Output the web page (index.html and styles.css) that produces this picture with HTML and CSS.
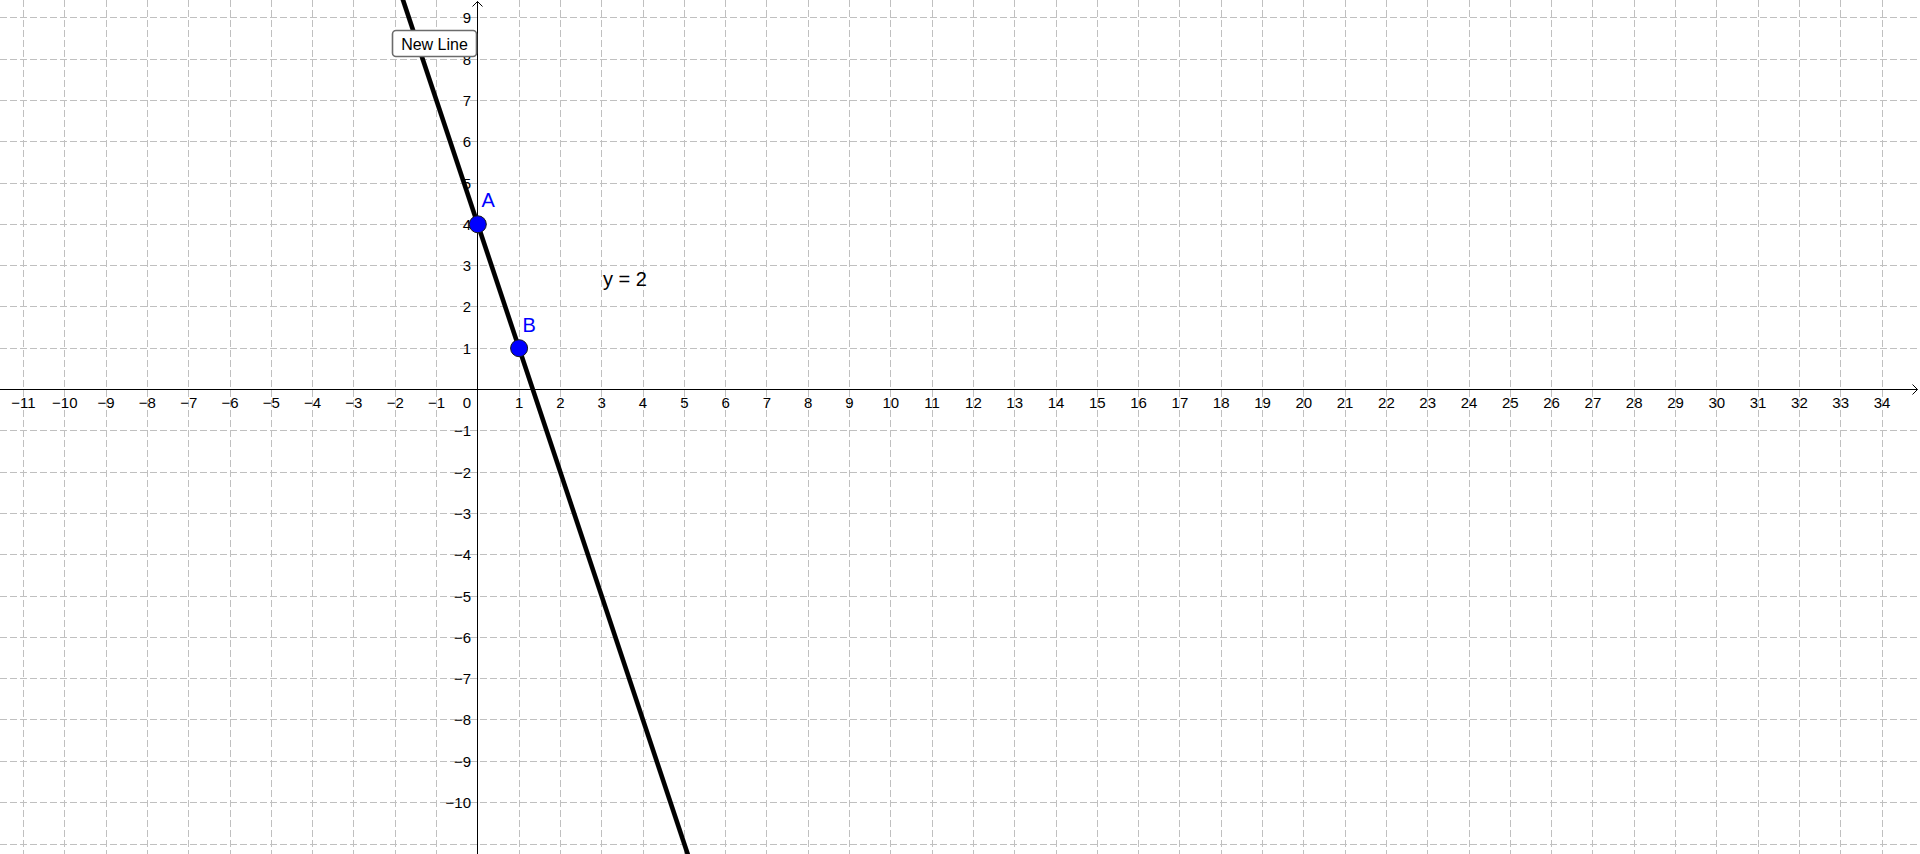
FILE: index.html
```html
<!DOCTYPE html>
<html lang="en">
<head>
<meta charset="utf-8">
<title>Graphics</title>
<link rel="stylesheet" href="styles.css">
</head>
<body>
<main class="board">
<svg class="plot" width="1920" height="854" viewBox="0 0 1920 854" xmlns="http://www.w3.org/2000/svg">
  <path class="grid" d="M23.5 0V854M64.5 0V854M106.5 0V854M147.5 0V854M188.5 0V854M230.5 0V854M271.5 0V854M312.5 0V854M353.5 0V854M395.5 0V854M436.5 0V854M519.5 0V854M560.5 0V854M601.5 0V854M643.5 0V854M684.5 0V854M725.5 0V854M766.5 0V854M808.5 0V854M849.5 0V854M890.5 0V854M932.5 0V854M973.5 0V854M1014.5 0V854M1056.5 0V854M1097.5 0V854M1138.5 0V854M1179.5 0V854M1221.5 0V854M1262.5 0V854M1303.5 0V854M1345.5 0V854M1386.5 0V854M1427.5 0V854M1469.5 0V854M1510.5 0V854M1551.5 0V854M1592.5 0V854M1634.5 0V854M1675.5 0V854M1716.5 0V854M1758.5 0V854M1799.5 0V854M1840.5 0V854M1882.5 0V854"/>
  <path class="grid" d="M0 17.5H1920M0 59.5H1920M0 100.5H1920M0 141.5H1920M0 183.5H1920M0 224.5H1920M0 265.5H1920M0 306.5H1920M0 348.5H1920M0 430.5H1920M0 472.5H1920M0 513.5H1920M0 554.5H1920M0 596.5H1920M0 637.5H1920M0 678.5H1920M0 719.5H1920M0 761.5H1920M0 802.5H1920M0 844.5H1920"/>
  <path class="axis" d="M477.5 1.5V854M0 389.5H1917.5"/>
  <path class="axis" d="M472.5 6.5L477.5 1.5L482.5 6.5M1912.5 384.5L1917.5 389.5L1912.5 394.5"/>

  <g class="tick xtick">
    <text x="23.5" y="408">−11</text>
    <text x="64.8" y="408">−10</text>
    <text x="106.1" y="408">−9</text>
    <text x="147.4" y="408">−8</text>
    <text x="188.7" y="408">−7</text>
    <text x="230" y="408">−6</text>
    <text x="271.3" y="408">−5</text>
    <text x="312.6" y="408">−4</text>
    <text x="353.9" y="408">−3</text>
    <text x="395.2" y="408">−2</text>
    <text x="436.5" y="408">−1</text>
    <text x="519.1" y="408">1</text>
    <text x="560.4" y="408">2</text>
    <text x="601.7" y="408">3</text>
    <text x="643" y="408">4</text>
    <text x="684.3" y="408">5</text>
    <text x="725.6" y="408">6</text>
    <text x="766.9" y="408">7</text>
    <text x="808.2" y="408">8</text>
    <text x="849.5" y="408">9</text>
    <text x="890.8" y="408">10</text>
    <text x="932.1" y="408">11</text>
    <text x="973.4" y="408">12</text>
    <text x="1014.7" y="408">13</text>
    <text x="1056" y="408">14</text>
    <text x="1097.3" y="408">15</text>
    <text x="1138.6" y="408">16</text>
    <text x="1179.9" y="408">17</text>
    <text x="1221.2" y="408">18</text>
    <text x="1262.5" y="408">19</text>
    <text x="1303.8" y="408">20</text>
    <text x="1345.1" y="408">21</text>
    <text x="1386.4" y="408">22</text>
    <text x="1427.7" y="408">23</text>
    <text x="1469" y="408">24</text>
    <text x="1510.3" y="408">25</text>
    <text x="1551.6" y="408">26</text>
    <text x="1592.9" y="408">27</text>
    <text x="1634.2" y="408">28</text>
    <text x="1675.5" y="408">29</text>
    <text x="1716.8" y="408">30</text>
    <text x="1758.1" y="408">31</text>
    <text x="1799.4" y="408">32</text>
    <text x="1840.7" y="408">33</text>
    <text x="1882" y="408">34</text>
  </g>

  <g class="tick ytick">
    <text x="471" y="408">0</text>
    <text x="471" y="23.3">9</text>
    <text x="471" y="64.6">8</text>
    <text x="471" y="105.9">7</text>
    <text x="471" y="147.2">6</text>
    <text x="471" y="188.5">5</text>
    <text x="471" y="229.8">4</text>
    <text x="471" y="271.1">3</text>
    <text x="471" y="312.4">2</text>
    <text x="471" y="353.7">1</text>
    <text x="471" y="436.3">−1</text>
    <text x="471" y="477.6">−2</text>
    <text x="471" y="518.9">−3</text>
    <text x="471" y="560.2">−4</text>
    <text x="471" y="601.5">−5</text>
    <text x="471" y="642.8">−6</text>
    <text x="471" y="684.1">−7</text>
    <text x="471" y="725.4">−8</text>
    <text x="471" y="766.7">−9</text>
    <text x="471" y="808">−10</text>
  </g>

  <line class="fline" x1="396.33" y1="-20" x2="694.33" y2="874"/>

  <g class="btn">
    <rect class="btn-box" x="392.5" y="30.5" width="84" height="26" rx="3.5"/>
    <text class="btn-text" x="434.5" y="49.5">New Line</text>
  </g>

  <circle class="pt" cx="477.8" cy="224.3" r="8.5"/>
  <circle class="pt" cx="519.1" cy="348.2" r="8.5"/>
  <text class="ptlabel" x="481.5" y="206.7">A</text>
  <text class="ptlabel" x="522.5" y="331.7">B</text>

  <text class="eqn" x="603" y="286">y = 2</text>
</svg>
</main>
</body>
</html>
```

FILE: styles.css
```css
html, body {
  margin: 0;
  padding: 0;
  background: #ffffff;
  overflow: hidden;
}

.board {
  display: block;
  width: 1920px;
  height: 854px;
  background: #ffffff;
}

.plot {
  display: block;
  font-family: "Liberation Sans", Arial, sans-serif;
}

.grid {
  fill: none;
  stroke: #c0c0c0;
  stroke-width: 1;
  stroke-dasharray: 7 3;
}

.axis {
  fill: none;
  stroke: #000000;
  stroke-width: 1;
}

.tick {
  font-size: 15px;
  fill: #000000;
}

.xtick {
  text-anchor: middle;
}

.ytick {
  text-anchor: end;
}

.fline {
  stroke: #000000;
  stroke-width: 4.6;
  stroke-linecap: butt;
}

.btn-box {
  fill: #ffffff;
  stroke: #6b6b6b;
  stroke-width: 1.6;
}

.btn-text {
  font-size: 16px;
  fill: #000000;
  text-anchor: middle;
}

.pt {
  fill: #0000ff;
  stroke: #1a1a1a;
  stroke-width: 1;
}

.ptlabel {
  font-size: 20px;
  fill: #0000ff;
}

.eqn {
  font-size: 20px;
  fill: #000000;
}
```
